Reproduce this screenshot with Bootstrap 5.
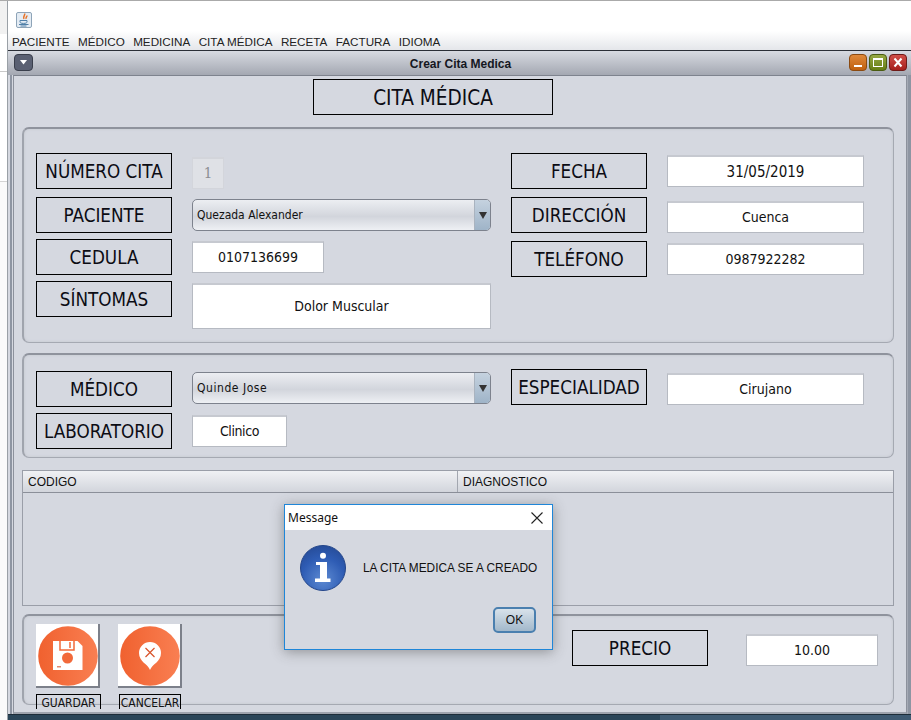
<!DOCTYPE html>
<html lang="es">
<head>
<meta charset="utf-8">
<title>Crear Cita Medica</title>
<link href="https://cdn.jsdelivr.net/npm/bootstrap@5.3.0/dist/css/bootstrap.min.css" rel="stylesheet">
<style>
html,body{margin:0;height:720px;overflow:hidden;background:#fff}
body{font-family:"Liberation Sans",Arial,sans-serif;color:#111;position:relative}
.desk{height:720px;width:911px;display:flex;flex-direction:column;background:linear-gradient(#f1f1f1 0,#f1f1f1 33px,#fff 33px,#fff 70px,#c9c9c9 70px,#c9c9c9 71px,#fff 71px,#fff 180px,#d4d4d4 180px,#d4d4d4 181px,#fafafa 181px);border-top:1px solid #aaa}
.app{margin-left:7px;flex:1;display:flex;flex-direction:column;min-height:0;border-left:1px solid #9aa0a6}
.apptop{height:30px;background:#fff;padding:6px 0 0 8px;flex:none}
.menubar{height:19px;flex:none;background:linear-gradient(#fff,#e4e6ea);display:flex;gap:8.4px;padding-left:4px;font-size:11.7px;line-height:21px;color:#222;white-space:nowrap}
.iframe-win{flex:1;min-height:0;background:#d5d8e0;border-top:1px solid #2a2e36;display:flex;flex-direction:column}
.ttl{height:24px;flex:none;background:linear-gradient(#d7dae1,#a4a8b2);display:flex;align-items:center;justify-content:center;position:relative;font-weight:700;font-size:12px;color:#14171f;padding:2px 0 0 2px}
.ttl .sysb{position:absolute;left:6px;top:3px;line-height:0}
.ttl .ctl{position:absolute;right:4px;top:3px;display:flex;gap:2px}
.inner{flex:1;min-height:0;margin:0 4px 0 5px;border:1px solid #8c919c;border-bottom:2px solid #9ea3ad;border-top-color:#7e838e;padding:3px 12px 0 8px;box-shadow:-1px 0 0 #d5d8e0,-3px 0 0 #8e95a2,1px 0 0 #a5aab5,4px 0 0 #8e95a2}
.headbox{width:240px;height:36px;border:1px solid #000;margin:0 0 0 291px;text-align:center;font-size:20.6px;line-height:36px;color:#0c0c14}
.lab{font-family:"DejaVu Sans Condensed","DejaVu Sans",sans-serif;font-stretch:condensed;width:136px;height:36px;border:1px solid #000;flex:none;text-align:center;font-size:18.7px;line-height:36px;color:#0c0c14;white-space:nowrap}
.lab-t{font-family:"DejaVu Sans Condensed","DejaVu Sans",sans-serif;font-stretch:condensed}
.group{border:1px solid #a5a9b2;border-top:2px solid #8f939d;border-left:2px solid #a0a4ad;border-radius:7px;box-shadow:inset 0 0 3px #c2c5cd}
.g1{height:216px;margin-top:12px;padding:24px 12px 0 12px}
.g2{height:105px;margin-top:10px;padding:16px 12px 0 12px}
.g3{height:91px;margin-top:8px;padding:8px 12px 0 12px;position:relative}
.cols{display:flex;gap:20px}
.lc{width:455px;flex:none}
.rc{width:353px;flex:none}
.line{display:flex;gap:20px;align-items:flex-start}
.gap6{margin-top:6px}
.nudge1{margin-top:1px}
.nudge2{margin-top:2px}
.up2{margin-top:-2px}
.fld{background:#fff;border:1px solid #b6bac2;border-top:2px solid #c6c9d0;height:32px;flex:none;text-align:center;font-family:"DejaVu Sans Condensed","DejaVu Sans",sans-serif;font-stretch:condensed;font-size:14px;line-height:28px;color:#111}
.w32{width:32px}.w95{width:95px}.w132{width:132px}.w197{width:197px}.w299{width:299px}
.tall{height:46px;line-height:43px}
.bigd{font-size:15px;line-height:30px}
.tight{letter-spacing:-.4px}
.off{background:#dfe1e6;border-color:#d3d5db;color:#8b8d92;font-family:"DejaVu Serif",serif;font-size:15px}
.combo{width:299px;height:32px;flex:none;border:1px solid #7d828d;border-radius:5px;background:linear-gradient(#eceef2,#d2d5dc 55%,#eef0f4);display:flex;font-family:"DejaVu Sans Condensed","DejaVu Sans",sans-serif;font-stretch:condensed;font-size:12px;line-height:30px;overflow:hidden}
.combo span{flex:1;padding-left:4px}
.combo .wide{letter-spacing:.55px}
.combo i{width:16px;flex:none;background:linear-gradient(#c5d2df,#9fb4c8);border-left:1px solid #a9b3bf;display:flex;align-items:center;justify-content:center}
.tbl{height:136px;margin-top:12px;border:1px solid #9a9ea8;position:relative}
.thd{height:22px;display:flex;background:linear-gradient(#f0f1f4,#d2d5dc);border-bottom:1px solid #8b8f99;font-size:12px;line-height:22px}
.thd div{padding-left:5px}
.thd div:first-child{width:435px;border-right:1px solid #a3a7b0}
.ibtn{width:64px;height:64px;background:#fff;border-right:2px solid #7c808a;border-bottom:2px solid #7c808a;flex:none;display:block;padding:0;line-height:0}
.foot{display:flex;gap:18px;align-items:flex-start}
.smb{height:15px;border:1px solid #000;border-bottom:0;font-family:"DejaVu Sans Condensed","DejaVu Sans",sans-serif;font-stretch:condensed;font-size:12px;line-height:17px;text-align:center;margin-top:6px;color:#111;overflow:hidden;white-space:nowrap}
.sm-a{margin-right:-1px}
.sm-b{margin:6px 1px 0 1px}
.g3 .price{position:absolute;left:548px;top:14px;display:flex;gap:38px;align-items:flex-start}
.taskbar{height:6px;flex:none;background:linear-gradient(90deg,#2a4558 0,#2a4558 652px,#3e5a72 652px);border-top:1px solid #1c2c38}
.dlg{position:absolute;left:284px;top:504px;width:269px;height:146px;background:#d5d8e0;border:1px solid #1f86d8;box-shadow:0 2px 12px rgba(60,60,60,.45)}
.dlgt{height:25px;background:#fff;display:flex;justify-content:space-between;align-items:center;padding:0 9px 0 3px;font-family:"Noto Sans",sans-serif;font-size:12px;color:#111}
.dlgb{display:flex;align-items:center;gap:17px;padding:15px 0 0 15px;font-size:11.85px;line-height:0}
.dlgb span{line-height:18px}
.okwrap{display:flex;justify-content:flex-end;padding:16px 16px 0 0}
.okbt{width:43px;height:26px;padding:0;border:2px solid #4a7faf;border-radius:5px;background:linear-gradient(#d8e2ea,#a2b8cb);font-size:12px;color:#111;line-height:22px;font-family:"Liberation Sans",Arial,sans-serif}
</style>
</head>
<body>
<div class="desk">
  <div class="app">
    <div class="apptop">
      <svg width="16" height="16" viewBox="0 0 16 16"><rect x=".5" y=".5" width="15" height="15" rx="1.5" fill="#e4ecf4" stroke="#8ea4b8"/><path d="M8.500 1.500c1.200 1.800-2 2.800-.6 5.500M10.800 3.500c.6 1.200-1.400 1.700-.6 3.300" fill="none" stroke="#e8742a" stroke-width="1.500"/><path d="M4 8.500h7v1.300c0 1-1 1.600-3.500 1.600S4 10.800 4 9.800zM3 12.500h9.500M4.500 14h6" fill="none" stroke="#4f7fa8"/></svg>
    </div>
    <div class="menubar"><span>PACIENTE</span><span>MÉDICO</span><span>MEDICINA</span><span>CITA MÉDICA</span><span>RECETA</span><span>FACTURA</span><span>IDIOMA</span></div>
    <div class="iframe-win">
      <div class="ttl">
        <span class="sysb"><svg width="19" height="17" viewBox="0 0 19 17"><rect x=".5" y=".5" width="18" height="16" rx="3.500" fill="#5a6072" stroke="#3a3f4c"/><path d="M6 6h7l-3.500 4.500z" fill="#fff"/></svg></span>
        <span>Crear Cita Medica</span>
        <span class="ctl">
          <svg width="18" height="17" viewBox="0 0 18 17"><defs><linearGradient id="o" x1="0" x2="0" y1="0" y2="1"><stop offset="0" stop-color="#e08a3c"/><stop offset="1" stop-color="#bf5f0e"/></linearGradient></defs><rect x=".5" y=".5" width="17" height="16" rx="3.500" fill="url(#o)" stroke="#8a4a12"/><rect x="5" y="11" width="8" height="2" fill="#fff"/></svg>
          <svg width="18" height="17" viewBox="0 0 18 17"><defs><linearGradient id="g" x1="0" x2="0" y1="0" y2="1"><stop offset="0" stop-color="#98aa46"/><stop offset="1" stop-color="#657c12"/></linearGradient></defs><rect x=".5" y=".5" width="17" height="16" rx="3.500" fill="url(#g)" stroke="#4a5c12"/><rect x="4.500" y="4.500" width="9" height="8" fill="none" stroke="#fff"/><rect x="4.500" y="4" width="9" height="2" fill="#fff"/></svg>
          <svg width="18" height="17" viewBox="0 0 18 17"><defs><linearGradient id="r" x1="0" x2="0" y1="0" y2="1"><stop offset="0" stop-color="#d2504a"/><stop offset="1" stop-color="#a51d1a"/></linearGradient></defs><rect x=".5" y=".5" width="17" height="16" rx="3.500" fill="url(#r)" stroke="#6e1a18"/><path d="M5.500 4.500l7 8M12.500 4.500l-7 8" stroke="#fff" stroke-width="2"/></svg>
        </span>
      </div>
      <div class="inner">
        <div class="headbox lab-t">CITA MÉDICA</div>
        <div class="group g1 cols">
          <div class="lc d-flex flex-column">
            <div class="line"><div class="lab">NÚMERO CITA</div><div class="fld w32 off mt-1">1</div></div>
            <div class="line mt-2"><div class="lab">PACIENTE</div><div class="combo nudge2"><span>Quezada Alexander</span><i><svg width="8" height="8" viewBox="0 0 8 8"><path d="M0 1h8L4 8z" fill="#333"/></svg></i></div></div>
            <div class="line gap6"><div class="lab">CEDULA</div><div class="fld w132 nudge2">0107136699</div></div>
            <div class="line gap6"><div class="lab">SÍNTOMAS</div><div class="fld w299 tall nudge2">Dolor Muscular</div></div>
          </div>
          <div class="rc d-flex flex-column">
            <div class="line"><div class="lab">FECHA</div><div class="fld w197 bigd nudge2">31/05/2019</div></div>
            <div class="line mt-2"><div class="lab">DIRECCIÓN</div><div class="fld w197 mt-1">Cuenca</div></div>
            <div class="line mt-2"><div class="lab">TELÉFONO</div><div class="fld w197 nudge2">0987922282</div></div>
          </div>
        </div>
        <div class="group g2 cols">
          <div class="lc d-flex flex-column">
            <div class="line"><div class="lab">MÉDICO</div><div class="combo nudge1"><span class="wide">Quinde Jose</span><i><svg width="8" height="8" viewBox="0 0 8 8"><path d="M0 1h8L4 8z" fill="#333"/></svg></i></div></div>
            <div class="line gap6"><div class="lab">LABORATORIO</div><div class="fld w95 tight nudge2">Clinico</div></div>
          </div>
          <div class="rc up2">
            <div class="line"><div class="lab">ESPECIALIDAD</div><div class="fld w197 mt-1">Cirujano</div></div>
          </div>
        </div>
        <div class="tbl"><div class="thd"><div>CODIGO</div><div>DIAGNOSTICO</div></div></div>
        <div class="group g3">
          <div class="foot">
            <div>
              <div class="ibtn"><svg width="62" height="62" viewBox="0 0 62 62"><defs><linearGradient id="c1"><stop offset="0" stop-color="#f0612f"/><stop offset="1" stop-color="#f97f52"/></linearGradient></defs><circle cx="32" cy="32" r="29.800" fill="url(#c1)"/><path d="M17 17h24.500l5 5v24H17z" fill="#fff"/><path d="M24 17v9h14v-9M34 18v6" fill="none" stroke="#f2693a" stroke-width="1.500"/><circle cx="31.500" cy="34" r="5.500" fill="#f2693a"/><rect x="21" y="42" width="4" height="1.500" fill="#e08a70"/></svg></div>
              <div class="smb sm-a">GUARDAR</div>
            </div>
            <div>
              <div class="ibtn"><svg width="62" height="62" viewBox="0 0 62 62"><circle cx="32" cy="32" r="29.800" fill="url(#c1)"/><path d="M32 46c-2-6-11-8-11-17a11 11 0 0 1 22 0c0 9-9 11-11 17z" fill="#fff"/><path d="M27.500 24l9 9M36.500 24l-9 9" stroke="#d9532a" stroke-width="1.200"/></svg></div>
              <div class="smb sm-b">CANCELAR</div>
            </div>
          </div>
          <div class="price"><div class="lab">PRECIO</div><div class="fld w132 mt-1">10.00</div></div>
        </div>
      </div>
    </div>
    <div class="taskbar"></div>
  </div>
</div>
<div class="dlg">
  <div class="dlgt"><span>Message</span><svg width="12" height="12" viewBox="0 0 12 12"><path d="M.5.500l11 11M11.500.500l-11 11" stroke="#222" stroke-width="1.100"/></svg></div>
  <div class="dlgb">
    <svg width="46" height="46" viewBox="0 0 46 46"><defs><radialGradient id="b" cx=".5" cy=".75" r=".8"><stop offset="0" stop-color="#5d8ad2"/><stop offset=".6" stop-color="#2e5cb4"/><stop offset="1" stop-color="#254a95"/></radialGradient></defs><circle cx="23" cy="23" r="22.500" fill="url(#b)" stroke="#24468a"/><circle cx="23" cy="10.700" r="3" fill="#fff"/><path d="M16 17h11v16.500h3.500V37H15v-3.500h5V20h-4z" fill="#fff"/></svg>
    <span>LA CITA MEDICA SE A CREADO</span>
  </div>
  <div class="okwrap"><button class="okbt" type="button">OK</button></div>
</div>
</body>
</html>
